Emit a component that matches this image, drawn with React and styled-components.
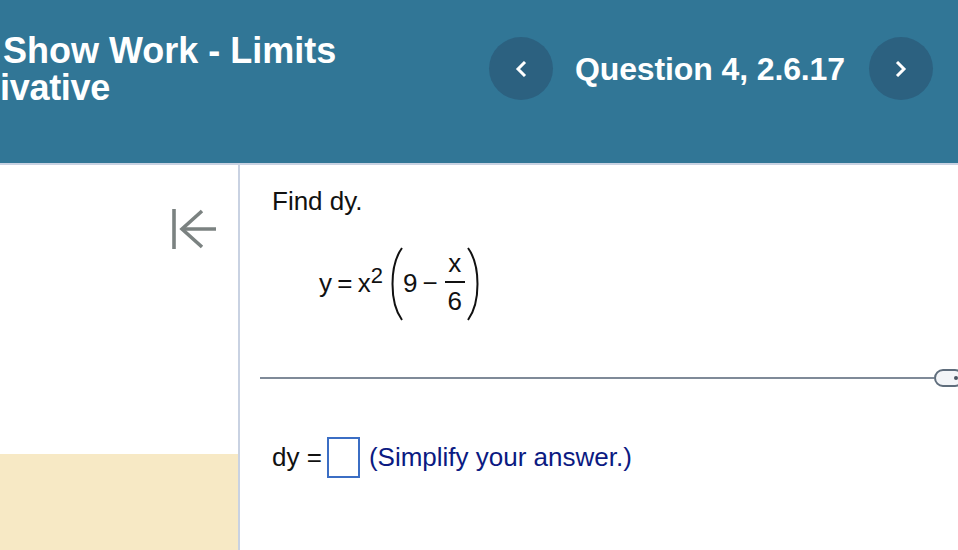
import styled, { createGlobalStyle } from "styled-components";

const GlobalStyle = createGlobalStyle`
  html, body {
    margin: 0;
    padding: 0;
    background: #ffffff;
    overflow: hidden;
  }
  body {
    font-family: "Liberation Sans", Arial, sans-serif;
  }
`;

export default function App() {
  return (
    <Page>
      <GlobalStyle />
      <Header>
        <Title>
          <span>Show Work - Limits</span>
          <TitleCut>ivative</TitleCut>
        </Title>
        <QuestionNav>
          <NavButton aria-label="Previous question">
            <Chevron points="10,1 3,8 10,15" />
          </NavButton>
          <QuestionName>Question 4, 2.6.17</QuestionName>
          <NavButton aria-label="Next question">
            <Chevron points="2,1 9,8 2,15" />
          </NavButton>
        </QuestionNav>
      </Header>
      <Body>
        <Sidebar>
          <CollapseRow>
            <svg width="44" height="40" viewBox="0 0 44 40" fill="none" stroke="#7b8281" strokeWidth="3.6">
              <path d="M2 0V40" />
              <path d="M44 20H10" />
              <path d="M30 2L10 20L30 38" />
            </svg>
          </CollapseRow>
          <SidebarNote />
        </Sidebar>
        <Content>
          <Prompt>Find dy.</Prompt>
          <Equation>
            <span>y = x</span>
            <Sup>2</Sup>
            <Paren viewBox="0 0 12 74">
              <path d="M11 1C3 12 1.500 24 1.500 37C1.500 50 3 62 11 73" />
            </Paren>
            <span>9 −</span>
            <Fraction>
              <span>x</span>
              <FractionBar />
              <span>6</span>
            </Fraction>
            <Paren viewBox="0 0 12 74">
              <path d="M1 1C9 12 10.500 24 10.500 37C10.500 50 9 62 1 73" />
            </Paren>
          </Equation>
          <DividerRow>
            <DividerLine />
            <DividerHandle />
          </DividerRow>
          <AnswerRow>
            <span>dy =</span>
            <AnswerBox />
            <Hint>(Simplify your answer.)</Hint>
          </AnswerRow>
        </Content>
      </Body>
    </Page>
  );
}

function Chevron({ points }) {
  return (
    <svg width="12" height="16" viewBox="0 0 12 16" fill="none" stroke="#ffffff" strokeWidth="3">
      <polyline points={points} />
    </svg>
  );
}

const Page = styled.div`
  width: 958px;
  height: 550px;
  display: flex;
  flex-direction: column;
  overflow: hidden;
`;

const Header = styled.header`
  height: 165px;
  flex-shrink: 0;
  box-sizing: border-box;
  padding: 32px 25px 0 3px;
  display: flex;
  justify-content: space-between;
  align-items: flex-start;
  background-color: #317696;
  border-bottom: 2px solid #c9d2e2;
`;

const Title = styled.h1`
  margin: 0;
  display: flex;
  flex-direction: column;
  font-size: 36px;
  line-height: 37px;
  font-weight: 700;
  color: #ffffff;
`;

const TitleCut = styled.span`
  margin-left: -3px;
  letter-spacing: -0.3px;
`;

const QuestionNav = styled.div`
  display: flex;
  align-items: center;
  gap: 22px;
  margin-top: 5px;
`;

const NavButton = styled.button`
  width: 64px;
  height: 63px;
  padding: 0;
  border: none;
  border-radius: 50%;
  background-color: #2c6180;
  display: flex;
  align-items: center;
  justify-content: center;
`;

const QuestionName = styled.span`
  width: 272px;
  padding-top: 2px;
  font-size: 32px;
  font-weight: 700;
  letter-spacing: -0.12px;
  color: #ffffff;
`;

const Body = styled.main`
  flex: 1;
  display: flex;
  min-height: 0;
`;

const Sidebar = styled.aside`
  width: 238px;
  flex-shrink: 0;
  display: flex;
  flex-direction: column;
  justify-content: space-between;
`;

const CollapseRow = styled.div`
  display: flex;
  justify-content: flex-end;
  padding: 44px 22px 0 0;
`;

const SidebarNote = styled.div`
  height: 96px;
  background-color: #f7e9c5;
`;

const Content = styled.section`
  flex: 1;
  min-width: 0;
  box-sizing: border-box;
  padding: 21px 0 0 32px;
  border-left: 2px solid #c9d2e2;
  color: #111111;
  font-size: 26px;
`;

const Prompt = styled.p`
  margin: 0;
  line-height: 31px;
`;

const Equation = styled.div`
  display: flex;
  align-items: center;
  height: 76px;
  margin: 28px 0 0 47px;
  font-size: 26px;
  word-spacing: -2px;
  white-space: nowrap;
`;

const Sup = styled.span`
  align-self: flex-start;
  margin-top: 18px;
  font-size: 22px;
`;

const Paren = styled.svg`
  width: 12px;
  height: 74px;
  margin: 2px 0 0 8px;
  fill: none;
  stroke: #111111;
  stroke-width: 2;

  &:last-child {
    margin: 2px 0 0 2px;
  }
`;

const Fraction = styled.span`
  display: flex;
  flex-direction: column;
  align-items: center;
  gap: 3px;
  width: 20px;
  margin: -2px 0 0 7px;
  line-height: 30px;
`;

const FractionBar = styled.span`
  width: 100%;
  height: 2px;
  background-color: #111111;
`;

const DividerRow = styled.div`
  display: flex;
  align-items: center;
  height: 18px;
  margin: 48px 0 0 -12px;
`;

const DividerLine = styled.div`
  flex: 1;
  height: 2px;
  background-color: #7f8a98;
`;

const DividerHandle = styled.div`
  position: relative;
  width: 30px;
  height: 18px;
  box-sizing: border-box;
  flex-shrink: 0;
  margin-right: -6px;
  border: 2px solid #5f6d7c;
  border-radius: 9px;
  background-color: #f3f5f8;

  &::after {
    content: "";
    position: absolute;
    left: 18px;
    top: 5px;
    width: 4px;
    height: 4px;
    border-radius: 50%;
    background-color: #4a5563;
  }
`;

const AnswerRow = styled.div`
  display: flex;
  align-items: center;
  margin-top: 49px;
  height: 42px;
`;

const AnswerBox = styled.div`
  width: 33px;
  height: 41px;
  box-sizing: border-box;
  margin: 0 9px 0 5px;
  border: 2px solid #3b6ec4;
`;

const Hint = styled.span`
  color: #0b1a82;
`;
